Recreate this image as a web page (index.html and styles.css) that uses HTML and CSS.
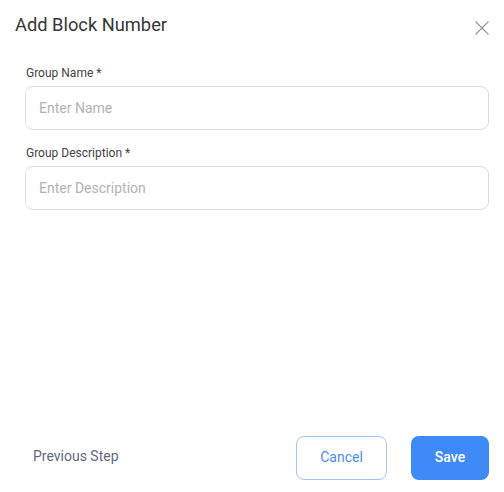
FILE: index.html
```html
<!DOCTYPE html>
<html>
<head>
<meta charset="utf-8">
<link rel="stylesheet" href="styles.css">
</head>
<body>
<div class="modal">
  <div class="header">
    <h1 class="title">Add Block Number</h1>
    <button class="close" aria-label="Close">
      <svg width="14" height="14" viewBox="0 0 14 14"><path d="M0.5 0.5L13.5 13.5M13.5 0.5L0.5 13.5" stroke="#8e96a4" stroke-width="1.1" fill="none"/></svg>
    </button>
  </div>
  <div class="form">
    <div class="group">
      <label class="label">Group Name *</label>
      <input class="input" type="text" placeholder="Enter Name">
    </div>
    <div class="group">
      <label class="label">Group Description *</label>
      <input class="input" type="text" placeholder="Enter Description">
    </div>
  </div>
  <div class="footer">
    <button class="prev">Previous Step</button>
    <div class="actions">
      <button class="btn btn-cancel">Cancel</button>
      <button class="btn btn-save">Save</button>
    </div>
  </div>
</div>
</body>
</html>
```
FILE: styles.css
```css
* { box-sizing: border-box; }
html, body { margin: 0; padding: 0; background: #fff; }
body { font-family: Roboto, "Liberation Sans", Arial, sans-serif; }
.modal {
  width: 504px;
  height: 492px;
  padding: 13px 15px 12px 15px;
  display: flex;
  flex-direction: column;
}
.header {
  display: flex;
  justify-content: space-between;
  align-items: flex-start;
}
.title {
  margin: 0;
  font-size: 18.3px;
  line-height: 24px;
  font-weight: 400;
  color: #363636;
}
.close {
  margin: 8px 0 0 0;
  padding: 0;
  border: 0;
  background: none;
  width: 14px;
  height: 14px;
  display: block;
}
.close svg { display: block; }
.form {
  margin-top: 28px;
  padding-left: 10px;
}
.group {
  display: flex;
  flex-direction: column;
  margin-bottom: 15px;
}
.label {
  font-size: 12px;
  line-height: 16px;
  color: #444444;
  margin-bottom: 5px;
  padding-left: 1px;
}
.input {
  height: 44px;
  width: 100%;
  border: 1px solid #dadde2;
  border-radius: 8px;
  padding: 0 13px;
  font-family: Roboto, "Liberation Sans", Arial, sans-serif;
  font-size: 14px;
  color: #333;
  outline: none;
  background: #fff;
}
.input::placeholder { color: #b3b3b3; }
.footer {
  margin-top: auto;
  display: flex;
  justify-content: space-between;
  align-items: center;
  height: 44px;
}
.prev {
  border: 0;
  background: none;
  padding: 0 0 5px 18px;
  font-family: Roboto, "Liberation Sans", Arial, sans-serif;
  font-size: 14px;
  color: #5f6a7e;
}
.actions {
  display: flex;
  gap: 24px;
}
.btn {
  height: 44px;
  border-radius: 8px;
  font-family: Roboto, "Liberation Sans", Arial, sans-serif;
  font-size: 14px;
  font-weight: 500;
  padding: 0 0 2px 0;
}
.btn-cancel {
  width: 91px;
  background: #fff;
  border: 1px solid #a3c6f9;
  color: #4a8ff5;
  font-weight: 400;
}
.btn-save {
  width: 78px;
  background: #3e8bf7;
  border: 0;
  color: #fff;
}
```
